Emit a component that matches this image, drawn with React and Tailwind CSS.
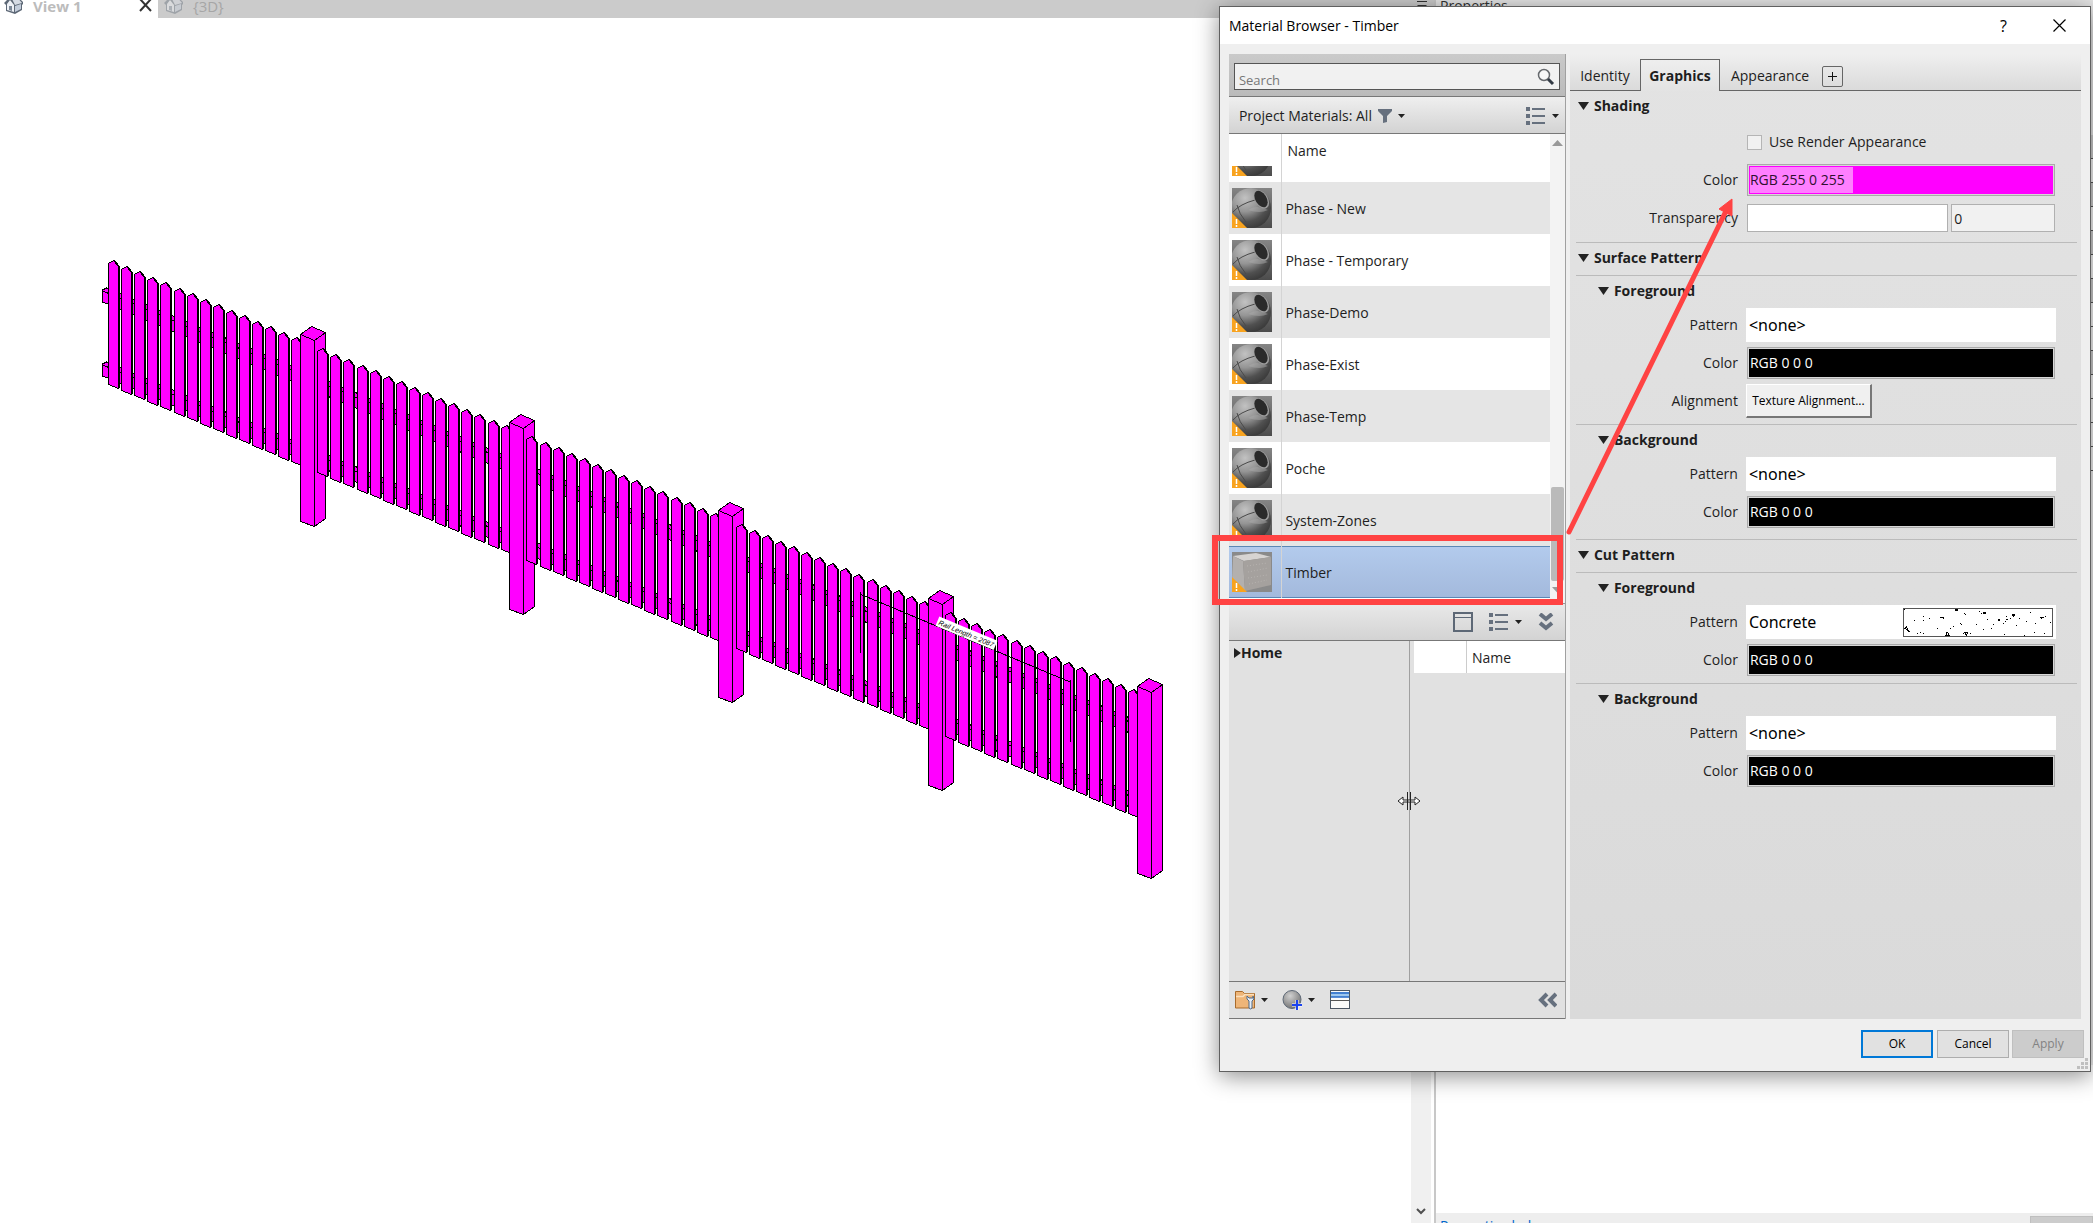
const MATERIALS = ['Phase - New', 'Phase - Temporary', 'Phase-Demo', 'Phase-Exist', 'Phase-Temp', 'Poche', 'System-Zones']

const BAYS = [0, 1, 2, 3, 4]
const BAY_WIDTH = 209.2
const BAY_DROP = 88
const PICKETS = Array.from({ length: 15 }, (_, i) => i)

const PROPERTY_ROWS = [
  'bg-[#cfcfcf]',
  'bg-[#f7f7f7]',
  'bg-[#cfcfcf]',
  'bg-[#f7f7f7]',
  'bg-[#cfcfcf]',
  'bg-[#f7f7f7]',
  'bg-[#cfcfcf]',
  'bg-[#f7f7f7]',
  'bg-[#f7f7f7]',
  'bg-[#cfcfcf]',
  'bg-[#f7f7f7]',
  'bg-[#f7f7f7]',
  'bg-[#f7f7f7]',
  'bg-[#f7f7f7]',
]

const SPECKS = [
  [1, 1], [11, 12], [20, 8], [20, 12], [26, 10], [37, 9], [39, 9], [40, 10], [53, 2], [61, 5], [62, 6], [76, 3],
  [78, 5], [84, 11], [88, 20], [90, 16], [96, 12], [100, 15], [102, 13], [103, 8], [107, 10], [110, 8], [113, 17],
  [116, 10], [123, 13], [127, 4], [132, 15], [138, 10], [140, 9], [142, 8], [57, 15], [58, 16], [73, 16], [80, 21],
  [34, 20], [47, 20], [43, 24], [14, 25], [17, 24], [20, 25], [4, 20], [6, 23], [60, 25], [67, 25], [101, 26],
  [121, 27], [131, 24], [141, 25], [147, 14], [50, 18],
]

function House({ faded }) {
  return (
    <svg width="20" height="14" viewBox="0 0 20 14" className={faded ? 'opacity-40' : ''}>
      <path d="M0 3 6-3h8l5 5v2l-1 1v5l-7 4-9-3V5z" fill="#5d6876" />
      <path d="M3 4 6 0l4 5v7l-7-2z" fill="#eef1f6" />
      <path d="M7-3h6l5 6-7 2z" fill="#d5dbe4" />
      <path d="m11 6 6-2v5l-6 3z" fill="#c3cddb" />
      <path d="M5 6h3v5l-3-1z" fill="#7d8998" />
    </svg>
  )
}

function Post({ x, y }) {
  return (
    <g transform={`translate(${x} ${y})`}>
      <path d="M.5 8.500 11.500.5l14 6v186l-11 8-14-5z" fill="#f0f" stroke="#000" />
      <path d="m.5 8.500 14 6 11-8M14.500 14.500v186" fill="none" stroke="#000" />
    </g>
  )
}

// front face of the board, with its thin side face showing as a line on the right
function Picket({ x, y }) {
  return (
    <g transform={`translate(${x} ${y})`}>
      <path d="M.5 3.500l5-3 5 6v122l-10-4z" fill="#f0f" stroke="#000" />
      <path d="M6.500.5l5 6v121" fill="none" stroke="#000" />
    </g>
  )
}

function Rail({ y }) {
  return (
    <g>
      <path d={`M102.500 ${y}l4-2 1033 434v15L108 ${y + 14}l-5.500-2z`} fill="#f0f" stroke="#000" />
      <path d={`M102.500 ${y + 1}l5 2 1032 433`} fill="none" stroke="#000" />
    </g>
  )
}

function Fence() {
  return (
    <svg width="1180" height="900" viewBox="0 18 1180 900" shapeRendering="crispEdges">
      <Rail y={290} />
      <Rail y={364} />
      {BAYS.slice(0, 4).map((bay) => (
        <g key={bay}>
          {bay > 0 && <Post x={Math.round(300 + (bay - 1) * BAY_WIDTH)} y={326 + (bay - 1) * BAY_DROP} />}
          {PICKETS.map((i) => (
            <Picket
              key={i}
              x={Math.round(108 + bay * BAY_WIDTH + i * 13.1)}
              y={Math.round(260 + bay * BAY_DROP + i * 5.5)}
            />
          ))}
        </g>
      ))}
      <Post x={928} y={590} />
      {PICKETS.map((i) => (
        <Picket key={i} x={Math.round(945 + i * 13.1)} y={Math.round(612 + i * 5.5)} />
      ))}
      <Post x={1137} y={678} />
      <path d="M860.500 592v61M1070.500 680v62M860 594l210 88" fill="none" stroke="#000" />
      <g transform="rotate(22.700 966 633)" shapeRendering="auto">
        <rect x="935" y="628" width="63" height="10" fill="#fff" />
        <text x="937" y="636" fontSize="7" fontFamily="Liberation Sans, sans-serif" fontStyle="italic">
          Rail Length = 2087
        </text>
      </g>
    </svg>
  )
}

function Warning() {
  return (
    <>
      <path d="M0 25 15 40H0z" fill="#f8a31f" />
      <path d="M4.500 31v5M4.500 37v2" stroke="#fff" strokeWidth="1.500" />
    </>
  )
}

function SphereThumb() {
  return (
    <svg width="40" height="40" viewBox="0 0 40 40" className="shrink-0">
      <defs>
        <radialGradient id="ball" cx="0.350" cy="0.250" r="0.850">
          <stop offset="0" stopColor="#c2c2c2" />
          <stop offset="0.400" stopColor="#959595" />
          <stop offset="0.700" stopColor="#505050" />
          <stop offset="1" stopColor="#333" />
        </radialGradient>
        <linearGradient id="backdrop" x1="0" y1="0" x2="0" y2="1">
          <stop offset="0" stopColor="#858585" />
          <stop offset="1" stopColor="#4c4c4c" />
        </linearGradient>
      </defs>
      <path d="M0 0h40v40H0z" fill="url(#backdrop)" />
      <circle cx="19" cy="20" r="20" fill="url(#ball)" />
      <path d="M1 24Q8 16 23 12M5 17q2 9 9 17" fill="none" stroke="#4a4a4a" />
      <path d="M16 22q8-6 20 0-8 4-20 0z" fill="#a9a9a9" opacity="0.500" />
      <ellipse cx="29.500" cy="11.500" rx="6.500" ry="10" transform="rotate(-32 29.500 11.500)" fill="#9c9c9c" />
      <ellipse cx="29" cy="11" rx="5.500" ry="9" transform="rotate(-32 29 11)" fill="#2a2a2a" />
      <Warning />
    </svg>
  )
}

function CubeThumb() {
  return (
    <svg width="40" height="40" viewBox="0 0 40 40" className="shrink-0">
      <path d="M0 0h40v40H0z" fill="#8a8a8a" />
      <path d="m1 4 23-3 15 4-27 4z" fill="#d7d4d2" />
      <path d="m1 4 10 5 2 30L0 28z" fill="#b3b0ae" />
      <path d="m11 9 28-4v28l-26 6z" fill="#a5a19e" />
      <path d="m15 14 20-3M16 20l20-4M16 26l19-3M17 32l18-4" stroke="#b7b3b0" strokeDasharray="1 2" />
      <Warning />
    </svg>
  )
}

function Caret() {
  return (
    <svg width="7" height="4" viewBox="0 0 7 4">
      <path d="M0 0h7L3.500 4z" fill="#222" />
    </svg>
  )
}

function ListIcon() {
  return (
    <svg width="20" height="18" viewBox="0 0 20 18" fill="#66707e">
      <path d="M0 0h4v4H0zM0 7h4v4H0zM0 14h4v4H0zM6 1h13v2H6zM6 8h13v2H6zM6 15h13v2H6z" />
    </svg>
  )
}

function Arrow() {
  return (
    <svg width="11" height="8" viewBox="0 0 11 8" className="shrink-0">
      <path d="M0 0h11L5.500 8z" fill="#222" />
    </svg>
  )
}

function Section({ title }) {
  return (
    <h2 className="flex h-8 items-center gap-[5px] pb-[2px] pl-[2px] text-sm font-bold">
      <Arrow />
      {title}
    </h2>
  )
}

function SubSection({ title }) {
  return (
    <h3 className="flex h-[30px] items-center gap-[5px] pl-[22px] text-sm font-bold">
      <Arrow />
      {title}
    </h3>
  )
}

function Row({ label, htmlFor, children }) {
  return (
    <div className="flex h-[38px] items-center">
      <label htmlFor={htmlFor} className="w-[162px] shrink-0 text-right">
        {label}
      </label>
      <div className="mr-[21px] ml-2 flex min-w-0 flex-1">{children}</div>
    </div>
  )
}

function ColorField({ id, value }) {
  return (
    <Row label="Color" htmlFor={id}>
      <button id={id} type="button" className="mx-px h-8 flex-1 border border-[#a9a9a9] bg-black p-0 text-left text-white outline-1 -outline-offset-2 outline-[#d8d8d8]">
        <span className="pl-[2px]">{value}</span>
      </button>
    </Row>
  )
}

function PatternField({ id, value, children }) {
  return (
    <Row label="Pattern" htmlFor={id}>
      <button id={id} type="button" className="flex h-[34px] flex-1 items-center justify-between bg-white px-[3px] font-['Noto_Sans',sans-serif] text-base text-black">
        {value}
        {children}
      </button>
    </Row>
  )
}

function Concrete() {
  return (
    <svg width="150" height="29" viewBox="0 0 150 29" shapeRendering="crispEdges">
      <rect x="0.500" y="0.500" width="149" height="28" fill="#fff" stroke="#555" />
      {SPECKS.map(([x, y]) => (
        <rect key={`${x}-${y}`} x={x} y={y} width="1" height="1" />
      ))}
      <path
        d="M52 1h3v2h-3zM80 4h3v2h-3zM109 6h3v2h-3zM137 9h3v1h-3zM95 11h2v2h-2zM38 9h3v1h-3zM103 11h2v1h-2z"
        fill="#000"
      />
      <path d="M1.500 20.500l2-2 1 3zM42.500 27.500l2-3 2 3zM61.500 24.500l2 3 1-3zM4.500 22.500l2 1" fill="none" stroke="#000" />
    </svg>
  )
}

function MaterialTable() {
  return (
    <div className="flex h-[469px] bg-white">
      <table className="flex-1 border-collapse self-start text-left">
        <thead>
          <tr className="h-8">
            <th className="w-[53px] border-r border-[#d4d4d4]" />
            <th className="pt-px pl-[5px] font-normal">Name</th>
          </tr>
        </thead>
        <tbody>
          <tr className="h-4">
            <td className="border-r border-[#d4d4d4] p-0">
              <div className="ml-[3px] flex h-4 items-end overflow-hidden pb-[6px]">
                <div className="flex h-[10px] items-end overflow-hidden">
                  <SphereThumb />
                </div>
              </div>
            </td>
            <td />
          </tr>
          {MATERIALS.map((name) => (
            <tr key={name} className="h-[52px] odd:bg-white even:bg-[#e5e5e5]">
              <td className="border-r border-[#d4d4d4] p-0 pl-[3px]">
                <SphereThumb />
              </td>
              <td className="p-0 pt-[2px] pl-[3px]">{name}</td>
            </tr>
          ))}
          <tr className="h-[52px] bg-linear-to-b from-[#b3cbed] to-[#a3b9dc] shadow-[inset_0_1px_#5b87b5,inset_0_-1px_#5b87b5]">
            <td className="border-r border-[#d4d4d4] p-0 pl-[3px]">
              <CubeThumb />
            </td>
            <td className="p-0 pt-[2px] pl-[3px]">Timber</td>
          </tr>
        </tbody>
      </table>
      <div className="flex w-[15px] flex-col items-center bg-[#f3f3f3] pt-[6px] pb-[10px]">
        <svg width="11" height="6" viewBox="0 0 11 6">
          <path d="M0 6h11L5.500 0z" fill="#999" />
        </svg>
        <div className="mt-auto h-[94px] w-[13px] rounded-xs bg-[#bababa]" />
        <svg width="11" height="6" viewBox="0 0 11 6" className="mt-[6px]">
          <path d="M0 0h11L5.500 6z" fill="#999" />
        </svg>
      </div>
    </div>
  )
}

function LibraryPanel() {
  return (
    <section className="flex w-[337px] shrink-0 flex-col border-r border-[#a0a0a0]">
      <div className="border-b border-[#777] bg-linear-to-b from-[#cacaca] to-[#bababa] px-[5px] pt-[9px] pb-[6px]">
        <div className="flex h-[27px] items-center border border-[#555] bg-[#f1f1f1] pr-1">
          <input
            type="text"
            aria-label="Search"
            placeholder="Search"
            className="h-full min-w-0 flex-1 bg-transparent pt-[7px] pl-1 text-[13px] leading-4 outline-none placeholder:text-[#777]"
          />
          <svg width="18" height="18" viewBox="0 0 18 18">
            <circle cx="7" cy="7" r="5.500" fill="#f8f8f8" stroke="#66696d" strokeWidth="1.500" />
            <path d="m11 11 5 5" stroke="#333b45" strokeWidth="3" />
          </svg>
        </div>
      </div>
      <div className="flex h-[37px] items-center border-b border-[#777] bg-linear-to-b from-[#efefef] to-[#d3d3d3] pt-px pr-[6px] pl-[10px]">
        <button type="button" className="flex items-center gap-[6px]">
          Project Materials: All
          <svg width="14" height="14" viewBox="0 0 14 14" fill="#66707e">
            <path d="M0 0h14v2L9 7v6l-4 1V7L0 2z" />
          </svg>
          <Caret />
        </button>
        <button type="button" aria-label="View options" className="ml-auto flex items-center gap-[6px]">
          <ListIcon />
          <Caret />
        </button>
      </div>
      <MaterialTable />
      <div className="flex h-[38px] items-center justify-end border-y border-t-[#999] border-b-[#777] bg-linear-to-b from-[#e9e9e9] to-[#d3d3d3] pr-[11px]">
        <button type="button" aria-label="Show panel">
          <svg width="20" height="20" viewBox="0 0 20 20" fill="none" stroke="#5d6876">
            <rect x="1" y="1" width="18" height="18" strokeWidth="2" />
            <path d="M2 5.500h16" />
          </svg>
        </button>
        <button type="button" aria-label="Library view" className="ml-4 flex items-center gap-[6px]">
          <ListIcon />
          <Caret />
        </button>
        <button type="button" aria-label="Collapse" className="ml-4">
          <svg width="16" height="18" viewBox="0 0 16 18" fill="none" stroke="#66707e" strokeWidth="4">
            <path d="m2 1 6 5 6-5M2 10l6 5 6-5" />
          </svg>
        </button>
      </div>
      <div className="flex h-[340px] bg-[#e1e1e1]">
        <div className="w-[181px] border-r border-[#a0a0a0] pt-[2px]">
          <button type="button" className="flex items-center pl-[5px] font-bold">
            <svg width="7" height="10" viewBox="0 0 7 10">
              <path d="M0 0v10l7-5z" fill="#222" />
            </svg>
            Home
          </button>
        </div>
        <div className="ml-1 flex h-8 flex-1 items-center bg-white">
          <div className="h-full w-[53px] border-r border-[#ccc]" />
          <span className="pt-px pl-[5px]">Name</span>
        </div>
      </div>
      <div className="flex h-[38px] items-center border-y border-[#777] bg-[#e1e1e1] pr-2 pl-[6px]">
        <button type="button" aria-label="Libraries" className="flex items-center gap-[6px]">
          <svg width="20" height="20" viewBox="0 0 20 20">
            <path d="M0.500 18V1.500h7l2 2h10V18z" fill="#eeb578" stroke="#a96b2b" />
            <path d="M1 6.500h7l2-2h9" fill="none" stroke="#fbe0bd" strokeWidth="1.500" />
            <path d="M14 18v-7l-2-2V6l2 2h4V6l1 3-2 2v7q-1 2-3 0z" fill="#e4edf7" stroke="#4f6a8a" />
          </svg>
          <Caret />
        </button>
        <button type="button" aria-label="Create material" className="ml-[14px] flex items-center gap-[6px]">
          <svg width="20" height="20" viewBox="0 0 20 20">
            <defs>
              <radialGradient id="globe" cx="0.400" cy="0.300" r="0.700">
                <stop offset="0" stopColor="#d0d0d0" />
                <stop offset="1" stopColor="#777" />
              </radialGradient>
            </defs>
            <circle cx="10" cy="9.500" r="9" fill="url(#globe)" stroke="#5d6876" />
            <path d="M15 10v10M10 15h10" stroke="#fff" strokeWidth="4" opacity="0.500" />
            <path d="M15 10v10M10 15h10" stroke="#1c44f0" strokeWidth="2" />
          </svg>
          <Caret />
        </button>
        <button type="button" aria-label="Asset browser" className="ml-[15px]">
          <svg width="20" height="20" viewBox="0 0 20 20">
            <rect x="0.500" y="0.500" width="19" height="18" fill="#fafafa" stroke="#4a5563" />
            <path d="M1 2h18v5H1z" fill="#9cc6ee" />
            <path d="M1 3h18M1 7h18" stroke="#2468c8" strokeWidth="1.500" />
            <path d="M1 10.500h18" stroke="#555" />
          </svg>
        </button>
        <button type="button" aria-label="Hide library" className="ml-auto">
          <svg width="19" height="16" viewBox="0 0 19 16" fill="none" stroke="#66707e" strokeWidth="4">
            <path d="m9 2-6 6 6 6M18 2l-6 6 6 6" />
          </svg>
        </button>
      </div>
    </section>
  )
}

function GraphicsPanel() {
  return (
    <section className="ml-1 flex min-w-0 flex-1 flex-col bg-linear-to-b from-[#e3e3e3] to-[#dadada]">
      <nav className="flex h-[37px] items-end bg-linear-to-b from-[#efefef] to-[#dadada]">
        <button type="button" className="h-full w-[70px] border-b border-[#666] pt-[7px] text-center">
          Identity
        </button>
        <button type="button" className="h-8 w-20 border border-b-0 border-[#666] bg-linear-to-b from-[#eee] to-[#e3e3e3] pt-px text-center font-bold">
          Graphics
        </button>
        <div className="flex h-full flex-1 items-center border-b border-[#666] pt-[7px] pl-[11px]">
          <button type="button">Appearance</button>
          <button type="button" aria-label="Add asset" className="mt-[2px] ml-[13px] grid size-[21px] place-items-center rounded-xs border border-[#666]">
            <svg width="9" height="9" viewBox="0 0 9 9">
              <path d="M4.500 0v9M0 4.500h9" stroke="#111" />
            </svg>
          </button>
        </div>
      </nav>
      <div className="flex-1 pr-1 pl-[6px]">
        <div className="border-b border-[#bbb] pb-[5px]">
          <Section title="Shading" />
          <div className="ml-[171px] flex h-[38px] items-center">
            <input id="render" type="checkbox" className="size-[15px] appearance-none border border-[#b5b5b5] bg-[#f1f1f1]" />
            <label htmlFor="render" className="pl-[7px]">
              Use Render Appearance
            </label>
          </div>
          <Row label="Color" htmlFor="shade">
            <button id="shade" type="button" className="mx-px flex h-8 flex-1 border border-[#a9a9a9] bg-[#f0f] p-[2px] text-left text-[#301030] outline-1 -outline-offset-2 outline-[#d8d8d8]">
              <span className="flex h-full w-[103px] items-center bg-[#ff7fff]">RGB 255 0 255</span>
            </button>
          </Row>
          <Row label="Transparency" htmlFor="transparency">
            <input id="transparency" type="text" className="mr-[3px] ml-px h-7 min-w-0 flex-2 border border-[#b0b0b0] bg-white" />
            <input type="text" aria-label="Transparency value" defaultValue="0" className="mr-px h-7 min-w-0 flex-1 border border-[#b0b0b0] bg-[#f1f1f1] pl-[2px]" />
          </Row>
        </div>
        <Section title="Surface Pattern" />
        <div className="border-y border-[#bbb] pb-1">
          <SubSection title="Foreground" />
          <PatternField id="sfp" value="<none>" />
          <ColorField id="sfc" value="RGB 0 0 0" />
          <Row label="Alignment" htmlFor="align">
            <button id="align" type="button" className="h-[34px] w-[126px] border border-t-white border-r-2 border-b-2 border-l-white border-r-[#777] border-b-[#777] bg-[#f0f0f0] text-xs text-black">
              Texture Alignment...
            </button>
          </Row>
        </div>
        <div className="border-b border-[#bbb] pb-2">
          <SubSection title="Background" />
          <PatternField id="sbp" value="<none>" />
          <ColorField id="sbc" value="RGB 0 0 0" />
        </div>
        <Section title="Cut Pattern" />
        <div className="border-y border-[#bbb] pb-1">
          <SubSection title="Foreground" />
          <PatternField id="cfp" value="Concrete">
            <Concrete />
          </PatternField>
          <ColorField id="cfc" value="RGB 0 0 0" />
        </div>
        <SubSection title="Background" />
        <PatternField id="cbp" value="<none>" />
        <ColorField id="cbc" value="RGB 0 0 0" />
      </div>
    </section>
  )
}

function MaterialBrowser() {
  return (
    <div role="dialog" aria-label="Material Browser" className="absolute top-[6px] right-[2px] w-5/12 border border-[#606060] bg-[#efefef] text-[#1e1e1e] shadow-[0_4px_22px_rgba(0,0,0,0.450)]">
      <header className="flex h-[37px] items-center bg-white pr-6 pl-[9px] text-black">
        <h1 className="flex-1">Material Browser - Timber</h1>
        <button type="button" className="text-base">
          ?
        </button>
        <button type="button" aria-label="Close" className="ml-[46px]">
          <svg width="13" height="13" viewBox="0 0 13 13">
            <path d="m0.500 0.500 12 12M12.500 0.500l-12 12" stroke="#000" strokeWidth="1.200" />
          </svg>
        </button>
      </header>
      <div className="flex px-[9px] pt-[10px]">
        <LibraryPanel />
        <GraphicsPanel />
      </div>
      <footer className="flex h-[52px] items-start justify-end pt-[11px] pr-[6px] text-xs">
        <button type="button" className="h-7 w-[72px] border-2 border-[#0078d7] bg-[#e1e1e1] text-black">
          OK
        </button>
        <button type="button" className="ml-1 h-7 w-[72px] border border-[#adadad] bg-[#e1e1e1] text-black">
          Cancel
        </button>
        <button type="button" disabled className="ml-[3px] h-7 w-[72px] border border-[#bfbfbf] bg-[#ccc] text-[#838383]">
          Apply
        </button>
      </footer>
      <svg width="11" height="11" viewBox="0 0 11 11" fill="#bfbfbf" className="absolute right-[2px] bottom-[2px]">
        <path d="M8 0h3v3H8zM4 4h3v3H4zM8 4h3v3H8zM0 8h3v3H0zM4 8h3v3H4zM8 8h3v3H8z" />
      </svg>
      {/* resize cursor over the splitter */}
      <svg width="24" height="22" viewBox="0 0 24 22" className="absolute top-[783px] left-[177px]">
        <path d="M10.500 2v18M13.500 2v18M1 11l5-4v3h12V7l5 4-5 4v-3H6v3z" fill="#fff" stroke="#222" />
      </svg>
      {/* red callout */}
      <svg width="520" height="600" viewBox="0 0 520 600" className="pointer-events-none absolute top-0 left-0 overflow-visible">
        <rect x="-5" y="531" width="345" height="64" fill="none" stroke="#ff4343" strokeWidth="6" />
        <path d="m349 525 157-321" stroke="#ff4343" strokeWidth="5" strokeLinecap="round" />
        <path d="m512 192-13 10 13 7z" fill="#ff4343" stroke="#ff4343" />
      </svg>
    </div>
  )
}

function App() {
  return (
    <main className="relative flex h-screen overflow-hidden bg-white font-['Open_Sans','Noto_Sans',sans-serif] text-sm leading-5">
      <div className="flex min-w-0 flex-1 flex-col">
        <div className="flex h-[18px] shrink-0 items-start bg-[#cbcbcb] text-[15px] leading-3">
          <div className="flex h-full w-[158px] items-start bg-white pr-[6px] pl-1">
            <House />
            <span className="pl-[9px] font-bold text-[#bcbcbc]">View 1</span>
            <button type="button" aria-label="Close view" className="ml-auto">
              <svg width="13" height="12" viewBox="0 0 13 12">
                <path d="m1-1 11 12M12-1 1 11" stroke="#333" strokeWidth="2" />
              </svg>
            </button>
          </div>
          <div className="flex items-start pl-[6px]">
            <House faded />
            <span className="pl-[9px] text-[#a6a6a6]">{'{3D}'}</span>
          </div>
          <svg width="10" height="7" viewBox="0 0 10 7" className="mr-[7px] ml-auto">
            <path d="M0 1h10v1H0zM0 5h10L8 7H2z" fill="#333" />
          </svg>
        </div>
        <div className="flex min-h-0 flex-1">
          <div className="min-w-0 flex-1 overflow-hidden">
            <Fence />
          </div>
          <div className="mr-[3px] flex w-5 items-end justify-center bg-[#f0f0f0] pb-2">
            <svg width="10" height="7" viewBox="0 0 10 7">
              <path d="m1 1 4 4 4-4" fill="none" stroke="#505050" strokeWidth="2" />
            </svg>
          </div>
        </div>
      </div>
      <aside className="flex w-[659px] shrink-0 flex-col border-l-2 border-[#c8c8c8] bg-white">
        <h2 className="h-[135px] bg-[#e6e6e6] pl-1 leading-3 text-[#333]">Properties</h2>
        <div className="h-[930px] bg-[#f0f0f0]">
          {PROPERTY_ROWS.map((tone, i) => (
            <div key={i} className={`h-6 border-b border-[#555] ${tone}`} />
          ))}
        </div>
        <div className="mt-auto flex h-[10px] items-start justify-between overflow-hidden bg-[#eee] pl-1">
          <a href="#help" className="pt-[3px] text-[#0066cc]">
            Properties help
          </a>
          <button type="button" aria-label="Apply properties" className="mt-[3px] h-5 w-[63px] border border-[#bfbfbf] bg-[#ccc]" />
        </div>
      </aside>
      <MaterialBrowser />
    </main>
  )
}

export default App
